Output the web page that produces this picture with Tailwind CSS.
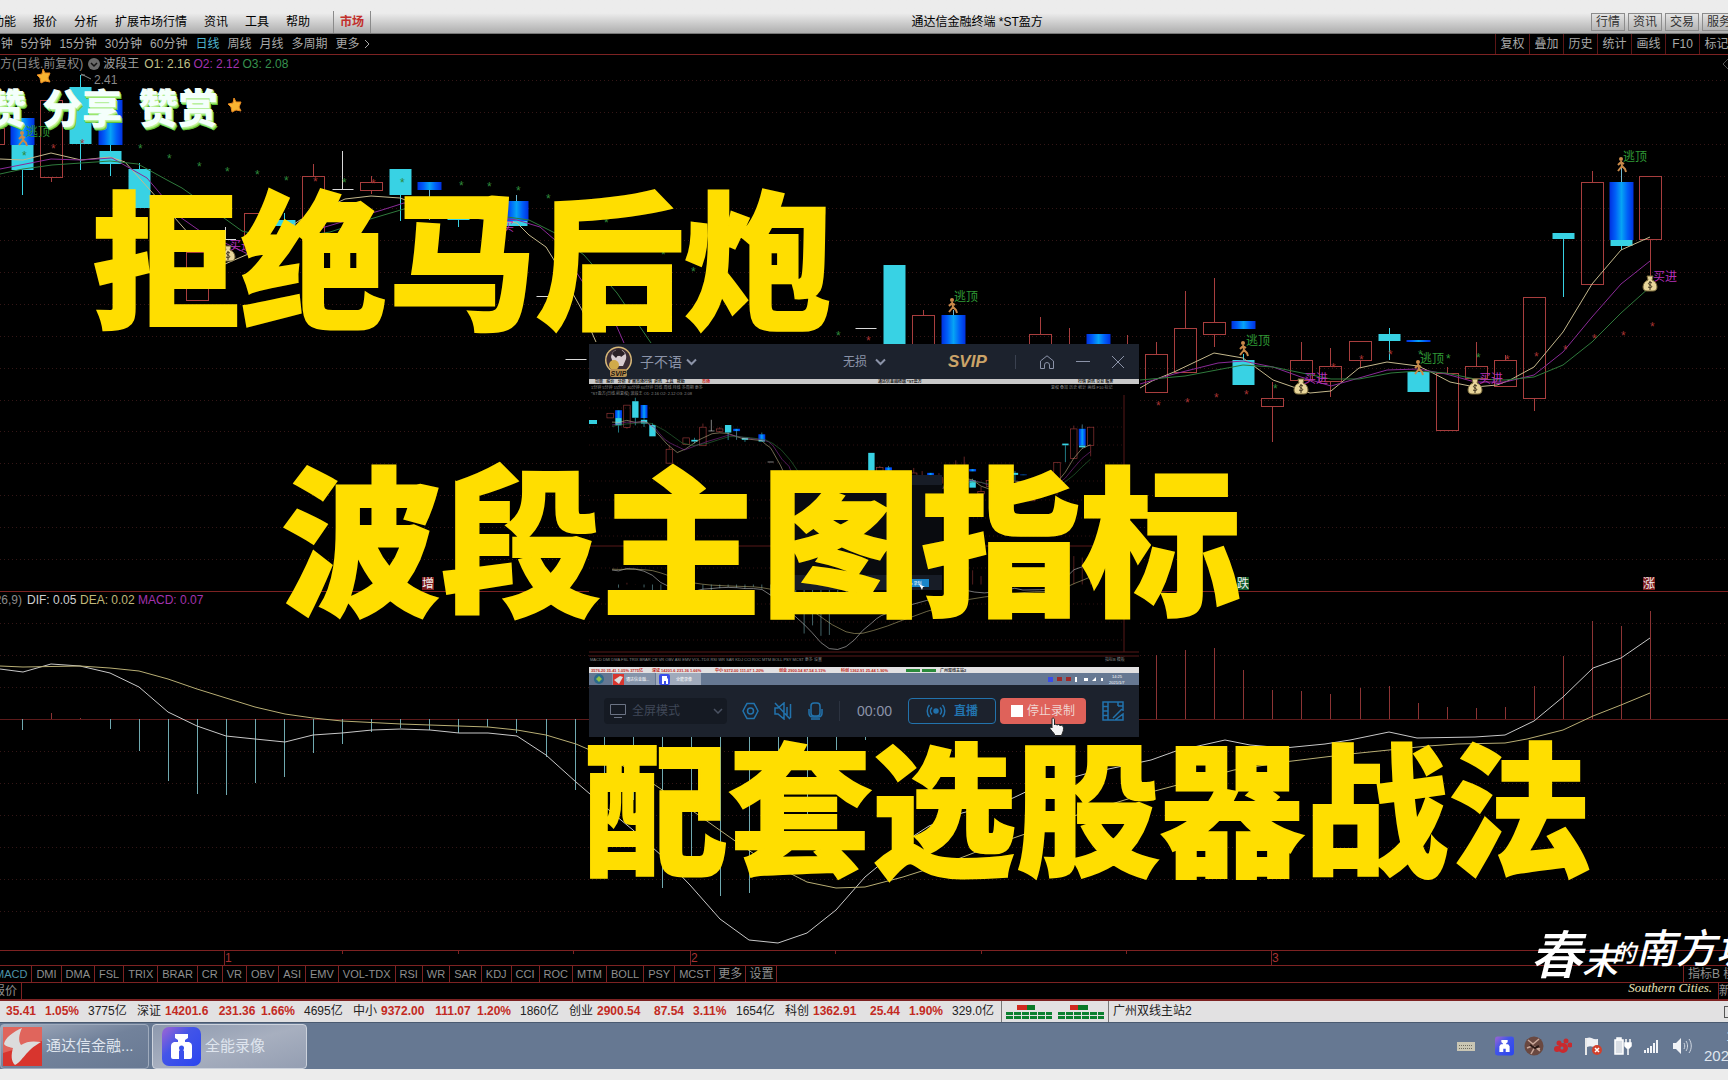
<!DOCTYPE html>
<html lang="zh-CN">
<head>
    <meta charset="UTF-8" />
    <meta name="viewport" content="width=device-width, initial-scale=1.0" />
    <title>通达信金融终端 *ST盈方</title>
    <script src="https://cdn.jsdelivr.net/npm/@tailwindcss/browser@4"></script>
</head>
<body class="bg-black">
<div class="relative flex min-h-screen w-full flex-col overflow-hidden bg-black font-['Liberation_Sans','Noto_Sans_CJK_SC',sans-serif] text-xs leading-4">

    <!-- Menu bar -->
    <header class="flex h-[34px] items-start overflow-hidden border-b border-[#777] bg-linear-to-b from-[#ececec] from-40% to-[#aeaeae] pt-[11px] text-black">
        <nav class="-ml-2 flex shrink-0 items-center gap-[17px] leading-[22px] whitespace-nowrap">
            <a href="#">功能</a>
            <a href="#">报价</a>
            <a href="#">分析</a>
            <a href="#">扩展市场行情</a>
            <a href="#">资讯</a>
            <a href="#">工具</a>
            <a href="#">帮助</a>
            <a href="#" class="ml-1.5 border-x border-[#8a8a8a] px-1.5 font-bold text-[#c2302c]">市场</a>
        </nav>
        <h1 class="mx-auto pr-2 leading-[22px]">通达信金融终端 *ST盈方</h1>
        <div class="flex w-[137px] shrink-0 gap-[3px] overflow-hidden pt-0.5">
            <button class="h-[18px] w-[34px] shrink-0 border border-[#8c8c8c] bg-linear-to-b from-[#e4e4e4] to-[#b4b4b4] text-[#333]">行情</button>
            <button class="h-[18px] w-[34px] shrink-0 border border-[#8c8c8c] bg-linear-to-b from-[#e4e4e4] to-[#b4b4b4] text-[#333]">资讯</button>
            <button class="h-[18px] w-[34px] shrink-0 border border-[#8c8c8c] bg-linear-to-b from-[#e4e4e4] to-[#b4b4b4] text-[#333]">交易</button>
            <button class="h-[18px] w-[34px] shrink-0 border border-[#8c8c8c] bg-linear-to-b from-[#e4e4e4] to-[#b4b4b4] text-[#333]">服务</button>
        </div>
    </header>

    <!-- Period bar -->
    <div class="flex h-[21px] justify-between overflow-hidden border-b border-[#7d2222] leading-5 whitespace-nowrap text-[#a9a9a9]">
        <nav class="-ml-[18px] flex gap-2">
            <a href="#">1分钟</a>
            <a href="#">5分钟</a>
            <a href="#">15分钟</a>
            <a href="#">30分钟</a>
            <a href="#">60分钟</a>
            <a href="#" class="text-[#4fb4cf]">日线</a>
            <a href="#">周线</a>
            <a href="#">月线</a>
            <a href="#">多周期</a>
            <a href="#" class="flex items-center gap-1">更多
                <svg class="h-2.5 w-1.5" viewBox="0 0 6 10" fill="none" stroke="#a9a9a9"><path d="M1 1l4 4-4 4" /></svg>
            </a>
        </nav>
        <nav class="flex w-[233px] shrink-0 overflow-hidden text-center">
            <a href="#" class="w-[34px] shrink-0 border-l border-[#5c1616]">复权</a>
            <a href="#" class="w-[34px] shrink-0 border-l border-[#5c1616]">叠加</a>
            <a href="#" class="w-[34px] shrink-0 border-l border-[#5c1616]">历史</a>
            <a href="#" class="w-[34px] shrink-0 border-l border-[#5c1616]">统计</a>
            <a href="#" class="w-[34px] shrink-0 border-l border-[#5c1616]">画线</a>
            <a href="#" class="w-[34px] shrink-0 border-l border-[#5c1616]">F10</a>
            <a href="#" class="w-[34px] shrink-0 border-l border-[#5c1616]">标记</a>
        </nav>
    </div>

    <!-- K line + MACD -->
    <main class="relative min-h-0 flex-1">
        <svg class="block h-full w-full" viewBox="0 55 1728 911" preserveAspectRatio="xMinYMin slice">
            <defs>
                <linearGradient id="blueBar">
                    <stop offset="0" stop-color="#0030e0" />
                    <stop offset="0.25" stop-color="#0060f8" />
                    <stop offset="0.5" stop-color="#06a4f4" />
                    <stop offset="0.75" stop-color="#0060f8" />
                    <stop offset="1" stop-color="#0030e0" />
                </linearGradient>
                <g id="runner">
                    <circle cx="0" cy="-6" r="2" fill="#c98a4a" />
                    <path d="M0-4L1 1M-3 0l3-3 3 2M1 1l-4 5M1 1l3 3 1 3" fill="none" stroke="#c98a4a" stroke-width="2" />
                </g>
                <g id="bag">
                    <path d="M-3-9h6l-1 4c3 1 5 4 5 7 0 3-2 4-4 4h-6c-2 0-4-1-4-4 0-3 2-6 5-7z" fill="#e8d69a" stroke="#7a6a3a" stroke-width="1" />
                    <path d="M2-2c-3-2-5 1-2 2s2 4-2 2M0-4v9" fill="none" stroke="#3a2f1a" stroke-width="1" />
                </g>
            </defs>
            <g id="grid" stroke="#341616" stroke-width="1" stroke-dasharray="1 3"></g>
            <path d="M0 591.5H1728M0 950.5H1728M0 965.5H1728" stroke="#7d2222" />
            <path d="M0 719.5H1728" stroke="#5c1a1a" />
            <path d="M224.5 950v16M690.5 950v16M1271.5 950v16M342.5 951v3M458.5 951v3M573.5 951v3M835.5 951v3M981.5 951v3M1126.5 951v3" stroke="#7d2222" />
            <g id="plot"></g>
            <g id="marks" font-size="12"></g>
            <path d="M225.5 227v13M225 239.5h11" stroke="#ddd" />
            <path d="M81 75l4 0M81 74l10 5" stroke="#888" fill="none" />
            <g font-size="12" fill="#8a8a8a">
                <text x="94" y="84">2.41</text>
                <g fill="#a83232">
                    <text x="225" y="962">1</text>
                    <text x="691" y="962">2</text>
                    <text x="1272" y="962">3</text>
                </g>
                <text x="-26" y="604">(12,26,9)</text>
                <text x="27" y="604" fill="#d0d0d0">DIF: 0.05</text>
                <text x="80" y="604" fill="#c0b878">DEA: 0.02</text>
                <text x="138" y="604" fill="#a233ae">MACD: 0.07</text>
            </g>
            <path d="M1728 59l-5 5 5 5" fill="none" stroke="#555" />
        </svg>
        <div class="absolute top-0 left-0 flex h-[18px] items-center gap-[5px] leading-[18px] whitespace-nowrap text-[#8a8a8a]">
            <span class="-ml-3">盈方(日线.前复权)</span>
            <svg class="h-3 w-3" viewBox="0 0 12 12"><circle cx="6" cy="6" r="6" fill="#6a6a6a" /><path d="M3 5l3 3 3-3" fill="none" stroke="#111" stroke-width="1.5" /></svg>
            <span class="-ml-0.5 text-[#a0a0a0]">波段王</span>
            <span class="text-[#c0c088]">O1: 2.16</span>
            <span class="-ml-0.5 text-[#a233ae]">O2: 2.12</span>
            <span class="-ml-0.5 text-[#37924f]">O3: 2.08</span>
        </div>
    </main>

    <!-- Indicator tabs -->
    <nav class="flex h-[17px] justify-between overflow-hidden border-b border-[#7d2222] text-[11px] whitespace-nowrap text-[#8f8f8f]">
        <div class="-ml-[9px] flex">
            <a href="#" class="border-r border-[#7d2222] px-1 text-[#4f94a8]">MACD</a>
            <a href="#" class="border-r border-[#7d2222] px-1">DMI</a>
            <a href="#" class="border-r border-[#7d2222] px-1">DMA</a>
            <a href="#" class="border-r border-[#7d2222] px-1">FSL</a>
            <a href="#" class="border-r border-[#7d2222] px-1">TRIX</a>
            <a href="#" class="border-r border-[#7d2222] px-1">BRAR</a>
            <a href="#" class="border-r border-[#7d2222] px-1">CR</a>
            <a href="#" class="border-r border-[#7d2222] px-1">VR</a>
            <a href="#" class="border-r border-[#7d2222] px-1">OBV</a>
            <a href="#" class="border-r border-[#7d2222] px-1">ASI</a>
            <a href="#" class="border-r border-[#7d2222] px-1">EMV</a>
            <a href="#" class="border-r border-[#7d2222] px-1">VOL-TDX</a>
            <a href="#" class="border-r border-[#7d2222] px-1">RSI</a>
            <a href="#" class="border-r border-[#7d2222] px-1">WR</a>
            <a href="#" class="border-r border-[#7d2222] px-1">SAR</a>
            <a href="#" class="border-r border-[#7d2222] px-1">KDJ</a>
            <a href="#" class="border-r border-[#7d2222] px-1">CCI</a>
            <a href="#" class="border-r border-[#7d2222] px-1">ROC</a>
            <a href="#" class="border-r border-[#7d2222] px-1">MTM</a>
            <a href="#" class="border-r border-[#7d2222] px-1">BOLL</a>
            <a href="#" class="border-r border-[#7d2222] px-1">PSY</a>
            <a href="#" class="border-r border-[#7d2222] px-1">MCST</a>
            <a href="#" class="border-r border-[#7d2222] px-[3px] text-xs leading-4">更多</a>
            <a href="#" class="border-r border-[#7d2222] px-[3px] text-xs leading-4">设置</a>
        </div>
        <a href="#" class="w-[45px] shrink-0 overflow-hidden border-l border-[#7d2222] pl-1 text-xs leading-4">指标B 模板</a>
    </nav>
    <nav class="flex h-[18px] justify-between overflow-hidden border-b-2 border-[#7d2222] whitespace-nowrap text-[#8f8f8f]">
        <a href="#" class="-ml-[7px] border-r border-[#7d2222] pr-1">报价</a>
        <a href="#" class="w-[10px] overflow-hidden border-l border-[#7d2222]">新</a>
    </nav>

    <!-- Index quotes -->
    <footer class="flex h-[22px] items-center overflow-hidden border-b border-[#4a5a70] bg-[#e2e1e2] leading-[21px] whitespace-nowrap text-[#222]">
        <div class="-ml-[3px] grid shrink-0 grid-cols-[48px_43px_49px]">
            <b class="text-center text-[#c22a22]">35.41</b><b class="text-[#c22a22]">1.05%</b><span>3775亿</span>
        </div>
        <div class="grid shrink-0 grid-cols-[28px_48px_48px_43px_49px]">
            <span>深证</span><b class="text-[#c22a22]">14201.6</b><b class="text-center text-[#c22a22]">231.36</b><b class="text-[#c22a22]">1.66%</b><span>4695亿</span>
        </div>
        <div class="grid shrink-0 grid-cols-[28px_48px_48px_43px_49px]">
            <span>中小</span><b class="text-[#c22a22]">9372.00</b><b class="text-center text-[#c22a22]">111.07</b><b class="text-[#c22a22]">1.20%</b><span>1860亿</span>
        </div>
        <div class="grid shrink-0 grid-cols-[28px_48px_48px_43px_49px]">
            <span>创业</span><b class="text-[#c22a22]">2900.54</b><b class="text-center text-[#c22a22]">87.54</b><b class="text-[#c22a22]">3.11%</b><span>1654亿</span>
        </div>
        <div class="grid shrink-0 grid-cols-[28px_48px_48px_43px_49px]">
            <span>科创</span><b class="text-[#c22a22]">1362.91</b><b class="text-center text-[#c22a22]">25.44</b><b class="text-[#c22a22]">1.90%</b><span>329.0亿</span>
        </div>
        <div class="flex h-full shrink-0 items-center gap-1.5 border-x border-[#777] px-1">
            <svg class="h-3.5 w-[46px]" viewBox="0 0 46 14"><path d="M11 0h10v5H11z" fill="#d02a20" /><path d="M21 0h8v5h-8z" fill="#0a7a28" /><path d="M0 8.500h46M0 12.500h46" stroke="#0a8030" stroke-width="3" stroke-dasharray="7 1" /></svg>
            <svg class="h-3.5 w-[46px]" viewBox="0 0 46 14"><path d="M12 0h8v5h-8z" fill="#d02a20" /><path d="M20 0h10v5H20z" fill="#0a7a28" /><path d="M0 8.500h46M0 12.500h46" stroke="#0a8030" stroke-width="3" stroke-dasharray="7 1" /></svg>
        </div>
        <span class="ml-1">广州双线主站2</span>
        <span class="ml-auto h-3 w-1 border border-r-0 border-[#555]"></span>
    </footer>

    <!-- Taskbar -->
    <div class="flex h-[46px] items-center overflow-hidden bg-[#667892] text-[15px] whitespace-nowrap text-[#dfe5ee]">
        <button class="flex h-[45px] w-[149px] items-center gap-1 rounded-sm border border-[#9fabbd] bg-linear-to-br from-[#a3adbe] via-[#72829b] to-[#687993] pl-0.5">
            <svg class="h-[39px] w-[39px]" viewBox="0 0 39 39"><path d="M0 0h39v39H0z" fill="#d8352e" /><path d="M0 0h39v14L0 26z" fill="#e0655c" /><path d="M19 1C10 5 2 11 1 17c2 3 6 3 9 4-2 7-2 13 2 17 8-4 10-14 26-23-8-1-14-1-20 3-3-4-2-11 1-17z" fill="#dcdcdc" /></svg>
            <span>通达信金融...</span>
        </button>
        <button class="ml-[3px] flex h-[45px] w-[155px] items-center gap-1 rounded-sm border border-[#ccd2dc] bg-linear-to-br from-[#8d99ae] via-[#a7afbf] to-[#949eb2] pl-[9px]">
            <svg class="h-[39px] w-[39px]" viewBox="0 0 39 39">
                <defs><linearGradient id="app" x2="1" y2="1"><stop offset="0.1" stop-color="#8a62d8" /><stop offset="0.4" stop-color="#4355e8" /><stop offset="1" stop-color="#2a45f0" /></linearGradient></defs>
                <rect width="39" height="39" rx="7" fill="url(#app)" />
                <path d="M13 7h13v4l-3 2v2h4q3 1 3 4v11q0 2-2 2h-6v-8l-2-2h-1l-2 2v8h-6q-2 0-2-2V19q0-3 3-4h4v-2l-3-2z" fill="#fff" /><circle cx="19.500" cy="21" r="2.500" fill="#3650ec" />
            </svg>
            <span>全能录像</span>
        </button>
        <div class="ml-auto flex shrink-0 items-center">
            <svg class="mr-5 h-3 w-[18px]" viewBox="0 0 18 12"><path d="M0 2h18v9H0z" fill="#c9c6b4" /><path d="M2 5.500h14M2 8.500h14" stroke="#6e6c60" stroke-dasharray="1 1" /></svg>
            <svg class="mr-2.5 h-5 w-[19px]" viewBox="0 0 39 39"><rect width="39" height="39" rx="5" fill="url(#app)" /><path d="M13 7h13v5l-3 2v2h4l3 4v12h-8v-7h-5v7H9V20l3-4h4v-2l-3-2z" fill="#fff" /></svg>
            <svg class="mr-2.5 h-5 w-5" viewBox="0 0 20 20"><circle cx="10" cy="10" r="9.500" fill="#6a4840" /><path d="M4 4l5 4 6-5M3 12l5-2 8 3M7 18l4-7 5 4" fill="none" stroke="#c9a79a" stroke-width="1.500" /><path d="M6 9l5 3 4-2" stroke="#2b1815" stroke-width="2" fill="none" /></svg>
            <svg class="mr-3 h-[18px] w-[18px]" viewBox="0 0 18 18" fill="#c92a2e"><circle cx="9" cy="11" r="5" /><circle cx="3" cy="12" r="3" /><circle cx="5" cy="6" r="2.500" /><circle cx="12" cy="4" r="2.500" /><circle cx="16" cy="8" r="2.500" /><circle cx="8" cy="11" r="1.500" fill="#667892" /></svg>
            <svg class="mr-2.5 h-5 w-[19px]" viewBox="0 0 19 20"><path d="M2 2v17" stroke="#e8e8e8" stroke-width="2" /><path d="M3 2c4-2 5 2 11 1v8c-5 1-6-2-11 0z" fill="#eef0f4" /><circle cx="13" cy="14" r="5" fill="#d2402c" /><path d="M11 12l4 4m0-4l-4 4" stroke="#fff" stroke-width="1.500" /></svg>
            <svg class="mr-3 h-5 w-[19px]" viewBox="0 0 19 20"><path d="M2 4h8v14H2zM4 2h4v2H4z" fill="#d8dde4" stroke="#fff" stroke-width="1.500" /><path d="M13 3v4M17 3v4M12 7h6v3l-2 2h-2l-2-2zM15 12v7" stroke="#fff" stroke-width="1.500" fill="#fff" /></svg>
            <svg class="mr-3 h-4 w-4" viewBox="0 0 16 16" fill="#f2f4f7"><path d="M0 12h2v3H0zM3 10h2v5H3zM6 8h2v7H6zM9 5h2v10H9zM12 2h2v13h-2z" /></svg>
            <svg class="mr-3 h-5 w-5" viewBox="0 0 20 20"><path d="M1 7h3l5-5v16l-5-5H1z" fill="#f2f4f7" /><path d="M12 7c1 2 1 4 0 6M14 5c2 3 2 7 0 10M17 3c3 4 3 10 0 14" fill="none" stroke="#d2d9e2" /></svg>
            <div class="w-6 overflow-hidden leading-5"><div class="pl-[22px]">14:25</div><div>2021/1/7</div></div>
        </div>
    </div>
    <div class="h-[11px] bg-[#ececec]"></div>

    <!-- Recorder window -->
    <section class="absolute top-[344px] left-[589px] w-[550px] bg-[#1c222d] text-[#8b93a8]">
        <div class="flex h-[35px] items-center pl-4">
            <svg class="h-8 w-[27px]" viewBox="0 0 27 32"><circle cx="13.500" cy="14" r="13.500" fill="#d8b878" /><circle cx="13.500" cy="14" r="12" fill="#3a2c34" /><path d="M6 11c1-5 4-7 5-7l1 6 3 0 2-6c3 2 5 5 4 9l-3 7H9z" fill="#d8ccd0" /><path d="M7 8c3-6 10-6 13 0l-4 3-2-3-3 4z" fill="#2a2026" /><circle cx="9" cy="19" r="5" fill="#d0aa4a" /><rect x="5" y="23" width="17" height="8" rx="2" fill="#b89050" /><text x="13.500" y="30" text-anchor="middle" font-size="7" font-weight="700" font-style="italic" fill="#1a1410">SVIP</text></svg>
            <span class="ml-2 text-sm">子不语</span>
            <svg class="ml-1 h-2 w-[11px]" viewBox="0 0 11 8" fill="none" stroke="#8b93a8" stroke-width="2"><path d="M1 1.500l4.500 4.500L10 1.500" /></svg>
            <span class="ml-[146px]">无损</span>
            <svg class="ml-2 h-2 w-[11px]" viewBox="0 0 11 8" fill="none" stroke="#8b93a8" stroke-width="2"><path d="M1 1.500l4.500 4.500L10 1.500" /></svg>
            <strong class="mr-auto ml-[62px] text-[17px] text-[#cba468] italic">SVIP</strong>
            <div class="flex items-center">
                <span class="h-3.5 w-px bg-[#3a4150]"></span>
                <button aria-label="主页" class="ml-6 h-3.5 w-3.5"><svg viewBox="0 0 14 14" fill="none" stroke="#8b93a8"><path d="M.5 6L7 .8 13.500 6v7.500h-4V10a2.500 2.500 0 0 0-5 0v3.500h-4z" /></svg></button>
                <button aria-label="最小化" class="ml-[22px] h-3.5 w-3.5"><svg viewBox="0 0 14 14" stroke="#8b93a8"><path d="M0 6.500h14" /></svg></button>
                <button aria-label="关闭" class="mr-[15px] ml-[22px] h-3 w-3"><svg viewBox="0 0 12 12" stroke="#8b93a8"><path d="M0 0l12 12M12 0L0 12" /></svg></button>
            </div>
        </div>
        <svg class="block h-[306px] w-full bg-black" viewBox="589 379 550 306" font-size="4" fill="#888">
            <path d="M589 379h550v5H589z" fill="#c8c8c8" />
            <g fill="#222" font-weight="700">
                <text x="595" y="383">功能&#160;&#160; 报价&#160;&#160; 分析&#160; 扩展市场行情&#160; 资讯&#160;&#160; 工具&#160;&#160; 帮助</text>
                <text x="702" y="383" fill="#c22">市场</text>
                <text x="878" y="383">通达信金融终端 *ST盈方</text>
                <text x="1078" y="383">行情 资讯 交易 服务</text>
            </g>
            <text x="591" y="389">1分钟 5分钟 15分钟 30分钟 60分钟 日线 周线 月线 多周期 更多</text>
            <text x="591" y="395">*ST盈方(日线.前复权) 波段王 O1: 2.16 O2: 2.12 O3: 2.08</text>
            <text x="1051" y="389">复权 叠加 历史 统计 画线 F10 标记</text>
            <path d="M589 408H1124M589 427H1124M589 445H1124M589 463H1124M589 481H1124M589 500H1124M589 518H1124M589 536H1124M589 568H1124M589 604H1124M589 622H1124M589 640H1124" stroke="#2e1111" stroke-dasharray="1 3" />
            <path d="M1124 395V652M589 652H1139M589 656H1139M589 546H1139" stroke="#571818" />
            <path d="M589 420h8v4h-8z" fill="#35d0e0" />
            <use href="#plot" transform="translate(612 376) scale(.29)" stroke-width="2" />
            <path d="M782 475h160v115H782z" fill="#090b0f" />
            <path d="M782 475h160v10H782zM782 575h160v15H782z" fill="#171c26" />
            <path d="M906 579h23v8h-23z" fill="#1b86c8" />
            <text x="910" y="585" fill="#fff">■ 录制</text>
            <path d="M919 584l3 6 1-3 2 0z" fill="#fff" />
            <text x="590" y="661">MACD DMI DMA FSL TRIX BRAR CR VR OBV ASI EMV VOL-TDX RSI WR SAR KDJ CCI ROC MTM BOLL PSY MCST 更多 设置</text>
            <text x="1105" y="661">指标B 模板</text>
            <path d="M589 667h550v6H589z" fill="#e2e1e2" />
            <g fill="#c22a22" font-weight="700">
                <text x="591" y="672">3576.20 35.41 1.05% 3775亿</text>
                <text x="652" y="672">深证 14201.6 231.36 1.66%</text>
                <text x="715" y="672">中小 9372.00 111.07 1.20%</text>
                <text x="779" y="672">创业 2900.54 87.54 3.11%</text>
                <text x="841" y="672">科创 1362.91 25.44 1.90%</text>
                <path d="M906 669h14v3h-14zM922 669h14v3h-14z" fill="#2a8a3a" />
                <text x="940" y="672" fill="#333">广州双线主站2</text>
            </g>
            <path d="M589 673h550v12H589z" fill="#667892" />
            <path d="M612 673h43v12h-43z" fill="#8594aa" /><path d="M656 673h45v12h-45z" fill="#a0aabb" />
            <circle cx="599" cy="679" r="5" fill="#2b6a8c" /><path d="M596 679l3-3 3 3-3 3z" fill="#8fc04a" />
            <path d="M613 674h11v11h-11z" fill="#d8352e" /><path d="M614 680l6-4 3 1-4 7z" fill="#ddd" />
            <rect x="659" y="674" width="11" height="11" rx="2" fill="#3a4de8" /><path d="M662 676h5v2l1 1v5h-2v-3h-2v3h-2v-5z" fill="#fff" />
            <g fill="#fff"><text x="626" y="681">通达信金融...</text><text x="676" y="681">全能录像</text><text x="1112" y="678">14:25</text><text x="1109" y="684">2021/1/7</text></g>
            <path d="M1038 679h4M1075 677h2v5h-2zM1084 678h4v3h-4zM1092 681l4-4v4zM1101 678h2v3h-2z" fill="#fff" /><path d="M1048 677h5v5h-5z" fill="#3a4de8" /><path d="M1057 677h5v4h-5zM1066 677h5v4h-5z" fill="#a02a2a" />
        </svg>
        <div class="flex h-[52px] items-center pl-[15px]">
            <label class="relative flex h-[26px] w-[123px] items-center rounded-sm bg-[#151a23] pl-1.5">
                <svg class="h-3.5 w-4" viewBox="0 0 16 14" fill="none" stroke="#6b7384"><path d="M.5.500h15v10H.5zM4 13.500h8" /></svg>
                <select aria-label="录制模式" class="ml-1.5 w-[84px] appearance-none text-[#3f4757]"><option>全屏模式</option></select>
                <svg class="absolute right-1 h-1.5 w-2.5" viewBox="0 0 10 6" fill="none" stroke="#4a5262" stroke-width="1.500"><path d="M1 1l4 4 4-4" /></svg>
            </label>
            <button aria-label="设置" class="ml-[15px] h-[18px] w-[17px]"><svg viewBox="0 0 17 18" fill="none" stroke="#2273ad" stroke-width="1.500"><path d="M5 1.500h7l1.500 2.500L16 9l-2.500 5-1.500 2.500H5L3.500 14 1 9l2.500-5z" /><circle cx="8.500" cy="9" r="3" /></svg></button>
            <button aria-label="静音" class="ml-[15px] h-[18px] w-[18px]"><svg viewBox="0 0 18 18" fill="none" stroke="#2273ad" stroke-width="1.500"><path d="M1 6h3l6-5v16l-6-5H1zM1 1l15 16M13 5v8M16.500 2v14" /></svg></button>
            <button aria-label="麦克风" class="ml-4 h-[18px] w-[15px]"><svg viewBox="0 0 15 18" fill="none" stroke="#2273ad" stroke-width="1.500"><rect x="3" y="1" width="9" height="13" rx="3" /><path d="M1 7v4c0 3 2 4 4 4h5c2 0 4-1 4-4V7M3 17h9" /></svg></button>
            <span class="ml-4 h-5 w-px bg-[#2c3340]"></span>
            <span class="ml-[17px] text-sm">00:00</span>
            <button class="mr-1 ml-auto flex h-[26px] w-[88px] items-center justify-center gap-2 rounded-sm border border-[#2273ad] font-bold text-[#2273ad]">
                <svg class="h-3.5 w-5" viewBox="0 0 20 14" fill="none" stroke="#2273ad" stroke-width="1.500"><circle cx="10" cy="7" r="2" fill="#2273ad" /><path d="M6 3.500c-2 2-2 5 0 7M14 3.500c2 2 2 5 0 7M3.500 1c-3 3-3 9 0 12M16.500 1c3 3 3 9 0 12" /></svg>
                直播
            </button>
            <button class="flex h-[26px] w-[86px] items-center justify-center gap-1 rounded-sm bg-[#df625a] text-[#f0d4d0]"><span class="h-3 w-3 bg-white"></span>停止录制</button>
            <button aria-label="编辑视频" class="mr-[15px] ml-4 h-5 w-[22px]"><svg viewBox="0 0 22 20" fill="none" stroke="#2273ad" stroke-width="1.500"><path d="M12 19H1V1h20v9M6 1v18M1 5.500h5M1 10h5M1 14.500h5M16 1v4M16 5h5M11 17L20 8M13 19h8v-6z" /></svg></button>
        </div>
        <svg class="absolute right-[74px] bottom-0 h-5 w-4" viewBox="0 0 16 20"><path d="M4 1c1 0 1.500 1 1.500 2v5l1-1 1.500 1 1.500-.5 1.500 1 1.500-.2c1.500.7 2 1.700 2 3.200 0 3-1 4-2 7H6c-1-3-4-5-5-7 0-2 2-1.500 2-.500V3c0-1 0-2 1-2z" fill="#f4f4f4" stroke="#222" /></svg>
    </section>

    <!-- Video stickers -->
    <div class="absolute top-[86px] left-0 flex gap-4 font-['Noto_Sans_CJK_SC',sans-serif] text-[40px] leading-none font-black whitespace-nowrap text-[#f4fffb] [text-shadow:1px_1px_0_#b8f0a0,1px_2px_0_#9be66e,2px_3px_0_#5fc23a]">
        <span class="-ml-[54px]">点赞</span><span>分享</span><span>赞赏</span>
    </div>
    <svg class="absolute top-[68px] left-9 h-4 w-4" viewBox="0 0 16 16"><path d="M7 1l2 4 5 0-2 5 2 4-5-1-4 2-1-5-3-3 5-1z" fill="#f8b432" stroke="#e88a20" /></svg>
    <svg class="absolute top-[97px] left-[227px] h-4 w-4" viewBox="0 0 16 16"><path d="M7 1l2 4 5 0-2 5 2 4-5-1-4 2-1-5-3-3 5-1z" fill="#f8b432" stroke="#e88a20" /></svg>

    <div class="absolute top-[179px] left-0 font-['Noto_Sans_CJK_SC',sans-serif] leading-none font-black whitespace-nowrap text-[#ffde00] [-webkit-text-stroke:2px_#ffde00]">
        <p class="pl-[92px] text-[148px] leading-none">拒绝马后炮</p>
        <p class="mt-[126px] pl-[281px] text-[160px] leading-none">波段主图指标</p>
        <p class="mt-[117px] pl-[584px] text-[144px] leading-none">配套选股器战法</p>
    </div>

    <div class="absolute right-0 bottom-[82px] flex h-[80px] w-[198px] items-start overflow-hidden font-['Noto_Sans_CJK_SC',sans-serif] font-medium whitespace-nowrap text-white italic">
        <span class="text-[52px] leading-[68px]">春</span>
        <span class="text-[36px] leading-[80px]">末</span>
        <span class="-ml-1.5 text-2xl leading-[68px]">的</span>
        <span class="text-[40px] leading-[56px]">南方城</span>
    </div>
    <p class="absolute right-4 bottom-[82px] font-['Liberation_Serif',serif] text-[13px] leading-5 text-[#e8e2b8] italic">Southern Cities.</p>
</div>

<script>
    const STEP = 29.07;
    const X0 = 22.8;
    const xAt = i => Math.floor(X0 + STEP * i) + 0.5;

    // [index, kind, bodyTop, bodyBottom, wickTop, wickBottom]
    const candles = [
        [-1, "r", 128, 144, 128, 144], [0, "b", 118, 145, 118, 145], [0, "c", 145, 170, 145, 195],
        [1, "r", 100, 177, 100, 182], [2, "c", 87, 144, 75, 170], [3, "b", 100, 145, 100, 145],
        [3, "c", 151, 164, 145, 176], [4, "c", 169, 208, 163, 208], [6, "r", 252, 300, 240, 300],
        [8, "r", 213, 236, 213, 236], [9, "c", 220, 226, 213, 232], [10, "r", 176, 240, 164, 240],
        [11, "w", 190, 190, 151, 190], [12, "r", 182, 190, 176, 194], [13, "c", 169, 195, 169, 221],
        [14, "b", 182, 190, 182, 220], [15, "c", 213, 220, 213, 227], [17, "b", 201, 221, 195, 221],
        [17, "c", 221, 226, 221, 226], [18, "w", 297, 297, 297, 297], [19, "w", 360, 360, 360, 360],
        [29, "w", 329, 329, 329, 329], [30, "c", 265, 360, 265, 360], [31, "r", 315, 350, 310, 350],
        [32, "b", 315, 352, 310, 352], [35, "r", 334, 360, 317, 360], [36, "r", 348, 370, 328, 370],
        [37, "b", 334, 346, 334, 346], [38, "r", 350, 370, 335, 370], [39, "r", 354, 392, 342, 392],
        [40, "r", 328, 372, 291, 372], [41, "r", 322, 334, 278, 347], [42, "b", 321, 329, 321, 329],
        [42, "c", 360, 385, 354, 385], [43, "r", 398, 406, 382, 442], [44, "r", 360, 380, 342, 380],
        [45, "r", 366, 381, 348, 397], [46, "r", 341, 360, 341, 367], [47, "c", 334, 341, 328, 360],
        [48, "b", 340, 342, 340, 342], [48, "c", 372, 392, 372, 392], [49, "r", 373, 430, 367, 430],
        [50, "r", 366, 378, 342, 378], [51, "r", 360, 386, 355, 386], [52, "r", 297, 398, 297, 411],
        [53, "c", 233, 239, 233, 297], [54, "r", 182, 284, 171, 284], [55, "b", 182, 240, 167, 240],
        [55, "c", 240, 246, 240, 250], [56, "r", 176, 239, 176, 277],
    ];

    // MACD histogram, first index 0, end y of each bar (zero line is 719)
    const hist = [730, 713, 718, 729, 751, 781, 794, 795, 783, 777, 753, 744, 732, 728, 730, 733, 727, 733, 757, 790,
        780, 800, 888, 860, 896, 893, 780, 815, 750, 740, 719, 719, 719, 719, 700, 690, 680, 670, 660, 655,
        650, 648, 670, 690, 691, 694, 688, 686, 703, 707, 708, 707, 686, 656, 621, 626, 611];

    const lines = [
        ["#c8c8c8", "0,669 23,672 51,664 80,666 110,673 139,687 168,712 197,726 226,736 255,739 285,742 313,735 342,733 372,730 401,729 430,730 459,733 488,733 517,736 546,755 576,782 604,806 633,830 662,856 690,885 720,919 749,940 778,943 807,933 836,910 865,877 894,853 912,837 929,826 962,813 985,807 1013,798 1034,788 1085,774 1151,760 1176,751 1225,740 1250,745 1284,748 1325,744 1350,740 1389,732 1417,738 1475,737 1505,735 1534,721 1563,697 1593,668 1621,658 1650,638"],
        ["#b8ae74", "0,666 23,667 80,666 110,668 139,671 168,679 197,689 226,698 255,707 285,714 313,718 342,721 401,724 459,726 488,727 517,730 546,735 576,744 613,760 655,785 697,814 738,843 760,858 807,882 836,888 865,887 903,877 950,862 1002,842 1028,833 1085,812 1151,792 1200,779 1234,770 1284,762 1350,754 1428,746 1457,744 1505,743 1527,739 1563,730 1593,716 1621,705 1650,693"],
        ["#c4b88c", "0,159 23,160 51,153 81,160 110,157 125,162 150,190 190,235 225,264 253,252 300,220 345,199 371,196 400,198 430,209 448,215 517,223 529,235 546,247 554,260 582,310 596,342"],
        ["#c4b88c", "1140,388 1152,381 1174,372 1214,353 1243,358 1273,380 1299,389 1310,393 1331,391 1359,368 1387,362 1418,366 1431,372 1450,382 1475,387 1497,385 1510,380 1534,367 1563,332 1592,284 1621,250 1650,237"],
        ["#8a2a98", "0,169 51,159 81,160 112,158 147,178 180,217 200,231 250,255 290,240 325,227 382,210 404,203 459,213 517,220 540,227 555,240 586,287 610,311 624,343"],
        ["#8a2a98", "1140,384 1174,374 1218,363 1243,361 1273,367 1301,377 1331,386 1359,378 1387,370 1418,369 1446,374 1475,382 1505,382 1534,375 1563,352 1592,317 1621,284 1650,261"],
        ["#2f7a3c", "0,174 23,169 52,165 81,163 110,161 138,164 167,180 182,188 206,205 242,231 280,240 330,232 367,220 404,209 430,209 478,213 529,220 555,233 584,255 617,293 651,343"],
        ["#2f7a3c", "1140,380 1185,376 1243,365 1273,367 1331,379 1359,379 1391,373 1418,371 1446,373 1475,379 1505,380 1534,377 1563,365 1592,342 1621,313 1650,287"],
    ];

    const greenStars = [[24, 154], [140, 147], [169, 157], [199, 165], [227, 170], [257, 173], [286, 179], [344, 181], [402, 181], [461, 184],
        [489, 185], [518, 189], [548, 197], [606, 221], [663, 253], [693, 270], [838, 334], [1275, 387], [1420, 353], [1478, 356]];
    const redStars = [[53, 147], [82, 142], [315, 180], [373, 182], [868, 339], [1158, 404], [1187, 401], [1216, 396], [1246, 393], [1333, 366],
        [1361, 358], [1390, 353], [1507, 358], [1536, 355], [1565, 348], [1594, 337], [1623, 334], [1652, 325]];

    const sells = [[22, 139, 26, 136], [952, 306, 954, 301], [1243, 349, 1246, 345], [1418, 368, 1420, 363], [1621, 165, 1623, 161]];
    const buys = [[228, 255, 229, 250], [1301, 388, 1304, 383], [1475, 388, 1479, 383], [1650, 285, 1653, 281]];
    const signals = [[428, "增", "#7d1c1c"], [1243, "跌", "#115a2a"], [1649, "涨", "#7d1c1c"]];

    let plot = "";
    candles.forEach(([i, kind, top, bottom, wickTop, wickBottom]) => {
        const x = xAt(i);
        const h = Math.max(bottom - top, 1);
        const color = { r: "#a83e3e", c: "#38d2e4", b: "#6fb8d0", w: "#d8d8d8" }[kind];
        if (wickTop < top) plot += `<path d="M${x} ${wickTop}V${top}" stroke="${color}"/>`;
        if (wickBottom > bottom) plot += `<path d="M${x} ${bottom}V${wickBottom}" stroke="${color}"/>`;
        if (kind === "r") plot += `<rect x="${x - 11}" y="${top + 0.5}" width="22" height="${h}" fill="none" stroke="${color}"/>`;
        if (kind === "c") plot += `<rect x="${x - 11}" y="${top}" width="22" height="${h}" fill="${color}"/>`;
        if (kind === "b") plot += `<rect x="${x - 12}" y="${top}" width="24" height="${h}" fill="url(#blueBar)"/>`;
        if (kind === "w") plot += `<path d="M${x - 10} ${top - 0.5}h21" stroke="${color}"/>`;
    });
    hist.forEach((y, i) => {
        const color = (y > 719) ? "#6fa9b0" : "#8c3434";
        plot += `<path d="M${xAt(i)} 719V${y}" stroke="${color}"/>`;
    });
    lines.forEach(([color, points]) => {
        plot += `<polyline points="${points}" fill="none" stroke="${color}"/>`;
    });
    document.getElementById("plot").innerHTML = plot;

    let grid = "";
    for (let k = 0; k < 27; k++) {
        const y = Math.round(80 + k * 31.95) + 0.5;
        if (k !== 16 && k !== 20) grid += `<path d="M0 ${y}H1728"/>`;
    }
    document.getElementById("grid").innerHTML = grid;

    let marks = "";
    greenStars.forEach(([x, y]) => { marks += `<text x="${x - 2}" y="${y + 6}" fill="#2f8a3c">*</text>`; });
    redStars.forEach(([x, y]) => { marks += `<text x="${x - 2}" y="${y + 6}" fill="#a83434">*</text>`; });
    sells.forEach(([x, y, tx, ty]) => {
        marks += `<use href="#runner" x="${x}" y="${y}"/><text x="${tx}" y="${ty}" fill="#2f9a36">逃顶</text>`;
    });
    buys.forEach(([x, y, tx, ty]) => {
        marks += `<text x="${tx}" y="${ty}" fill="#b430b8">买进</text><use href="#bag" x="${x}" y="${y}"/>`;
    });
    signals.forEach(([x, label, color]) => {
        marks += `<rect x="${x - 6}" y="577" width="12" height="13" fill="${color}"/><text x="${x - 6}" y="588" fill="#eee">${label}</text>`;
    });
    marks += `<text x="502" y="231" fill="#b430b8">买</text><text x="1446" y="363" fill="#2f9a36">*</text>`;
    document.getElementById("marks").innerHTML = marks;
</script>
</body>
</html>
